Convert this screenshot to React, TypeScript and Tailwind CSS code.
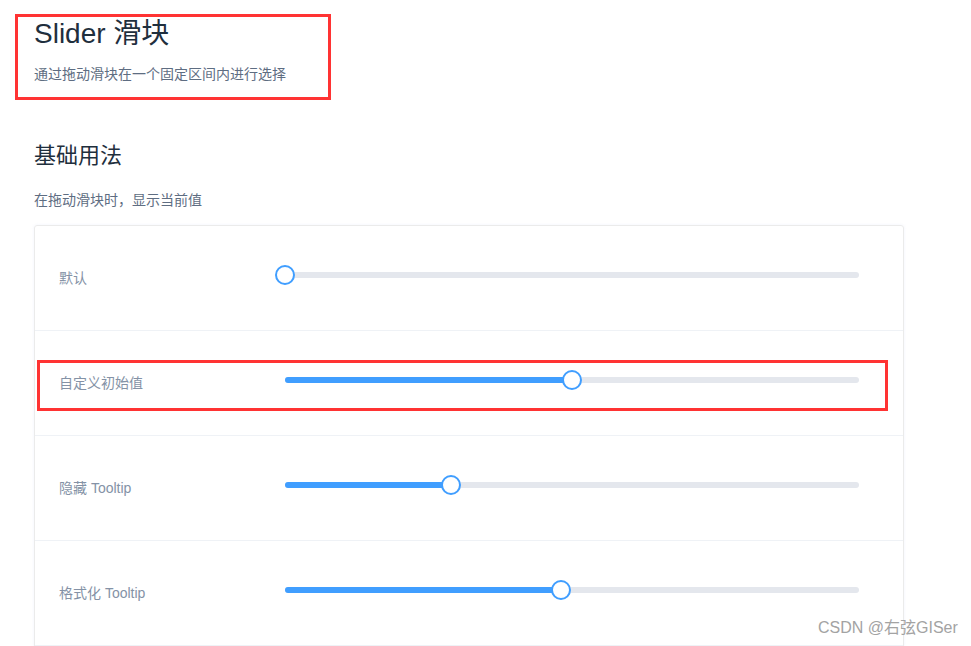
import React from "react";

const font = { fontFamily: '"Liberation Sans", "Noto Sans CJK SC", sans-serif' };

function Slider({ value }: { value: number }) {
  return (
    <div className="w-[574px] mr-[20px] h-[38px] pt-[16px]">
      <div className="relative h-[6px] w-full rounded-[3px] bg-[#e4e7ed]">
        <div
          className="absolute left-0 top-0 h-[6px] rounded-[3px] bg-[#409eff]"
          style={{ width: `${value}%` }}
        />
        <div
          className="absolute top-[-7px] ml-[-10px] h-[20px] w-[20px] rounded-full border-2 border-[#409eff] bg-white"
          style={{ left: `${value}%` }}
        />
      </div>
    </div>
  );
}

function Row({ label, value, marked, last }: { label: string; value: number; marked?: boolean; last?: boolean }) {
  return (
    <div className={`relative flex items-start px-[24px] py-[30px] ${last ? "" : "border-b border-[#eff2f6]"}`}>
      <span className="flex-1 text-[14px] leading-[44px] text-[#8492a6]">{label}</span>
      <Slider value={value} />
      {marked && (
        <div className="pointer-events-none absolute left-[2px] top-[29px] h-[51px] w-[851px] border-[3px] border-[#ff3333]" />
      )}
    </div>
  );
}

export default function App() {
  return (
    <div className="relative min-h-[646px] w-[971px] overflow-hidden bg-white" style={font}>
      <div className="pl-[15px] pt-[14px]">
        <div className="h-[86px] w-[316px] border-[3px] border-[#ff3333] pl-[16px]">
          <h2 className="text-[28px] leading-[34px] font-normal text-[#1f2f3d]">Slider 滑块</h2>
          <p className="mt-[13px] text-[14px] leading-[20px] text-[#5e6d82]">通过拖动滑块在一个固定区间内进行选择</p>
        </div>
      </div>
      <div className="pl-[34px]">
        <h3 className="mt-[41px] text-[22px] leading-[30px] font-normal text-[#1f2f3d]">基础用法</h3>
        <p className="mt-[19px] text-[14px] leading-[20px] text-[#5e6d82]">在拖动滑块时，显示当前值</p>
        <div className="mt-[15px] w-[870px] rounded-t-[3px] border border-[#ebebeb] shadow-[0_0_3px_rgba(232,237,250,0.6)]">
          <Row label="默认" value={0} />
          <Row label="自定义初始值" value={50} marked />
          <Row label="隐藏 Tooltip" value={29} />
          <Row label="格式化 Tooltip" value={48} />
        </div>
      </div>
      <div className="absolute left-[818px] top-[617px] text-[16px] leading-[22px] text-[#a3a3a3]">CSDN @右弦GISer</div>
    </div>
  );
}
